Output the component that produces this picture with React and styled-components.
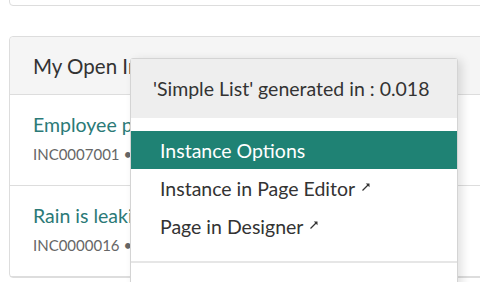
import styled, { createGlobalStyle } from 'styled-components';

const GlobalStyle = createGlobalStyle`
  body {
    margin: 0;
    background: #fff;
    font-family: Lato, "Open Sans", sans-serif;
    color: #333;
    overflow: hidden;
  }
`;

const Page = styled.div`
  position: relative;
  width: 480px;
  height: 282px;
  overflow: hidden;
  padding-left: 9px;
  box-sizing: border-box;
`;

const Card = styled.div`
  width: 520px;
  border: 1px solid #ddd;
  border-radius: 4px;
  background: #fff;
  box-sizing: border-box;
`;

const TopCard = styled(Card)`
  height: 26px;
  margin-top: -20px;
`;

const ListCard = styled(Card)`
  margin-top: 30px;
`;

const CardHeader = styled.div`
  height: 57px;
  background: #f5f5f5;
  border-bottom: 1px solid #ddd;
  border-radius: 4px 4px 0 0;
  display: flex;
  align-items: center;
  padding-left: 23px;
  font-size: 20.5px;
`;

const Row = styled.div`
  height: 91px;
  border-bottom: 1px solid #ddd;
  padding: 18px 0 0 23px;
  box-sizing: border-box;
`;

const RowTitle = styled.div`
  color: #2b7a77;
  font-size: 19.5px;
  line-height: 24px;
`;

const RowMeta = styled.div`
  color: #666;
  font-size: 15px;
  margin-top: 8px;
`;

const Menu = styled.div`
  position: absolute;
  left: 130px;
  top: 58px;
  width: 328px;
  background: #fff;
  border: 1px solid #d4d4d4;
  border-radius: 3px 3px 0 0;
  box-shadow: 4px 2px 10px rgba(0, 0, 0, 0.12);
  box-sizing: border-box;
`;

const MenuHeader = styled.div`
  height: 59px;
  background: #eee;
  display: flex;
  align-items: center;
  padding-left: 22px;
  font-size: 19.5px;
`;

const MenuList = styled.div`
  padding: 13px 0 16px;
  border-bottom: 2px solid #e6e6e6;
`;

const MenuItem = styled.div`
  height: 38px;
  display: flex;
  align-items: center;
  padding-left: 29px;
  font-size: 19.5px;
  color: ${(p) => (p.active ? '#fff' : '#333')};
  background: ${(p) => (p.active ? '#1f8274' : 'transparent')};
`;

const ExtIcon = styled.svg`
  margin-left: 6px;
  width: 10px;
  height: 10px;
  margin-top: -2px;
`;

const MenuRest = styled.div`
  height: 30px;
`;

const Ext = () => (
  <ExtIcon viewBox="0 0 10 10">
    <path d="M1.5 8.5 L7.5 2.5" stroke="#333" strokeWidth="1.3" fill="none" />
    <path d="M4.8 1.5 H8.5 V5.2 Z" fill="#333" />
  </ExtIcon>
);

export default function App() {
  return (
    <Page>
      <GlobalStyle />
      <TopCard />
      <ListCard>
        <CardHeader>My Open Incidents</CardHeader>
        <Row>
          <RowTitle>Employee payroll application</RowTitle>
          <RowMeta>INC0007001 • 2 days ago</RowMeta>
        </Row>
        <Row>
          <RowTitle>Rain is leaking on main DNS Server</RowTitle>
          <RowMeta>INC0000016 • 5 days ago</RowMeta>
        </Row>
      </ListCard>
      <Menu>
        <MenuHeader>'Simple List' generated in : 0.018</MenuHeader>
        <MenuList>
          <MenuItem active>Instance Options</MenuItem>
          <MenuItem>Instance in Page Editor<Ext /></MenuItem>
          <MenuItem>Page in Designer<Ext /></MenuItem>
        </MenuList>
        <MenuRest />
      </Menu>
    </Page>
  );
}
